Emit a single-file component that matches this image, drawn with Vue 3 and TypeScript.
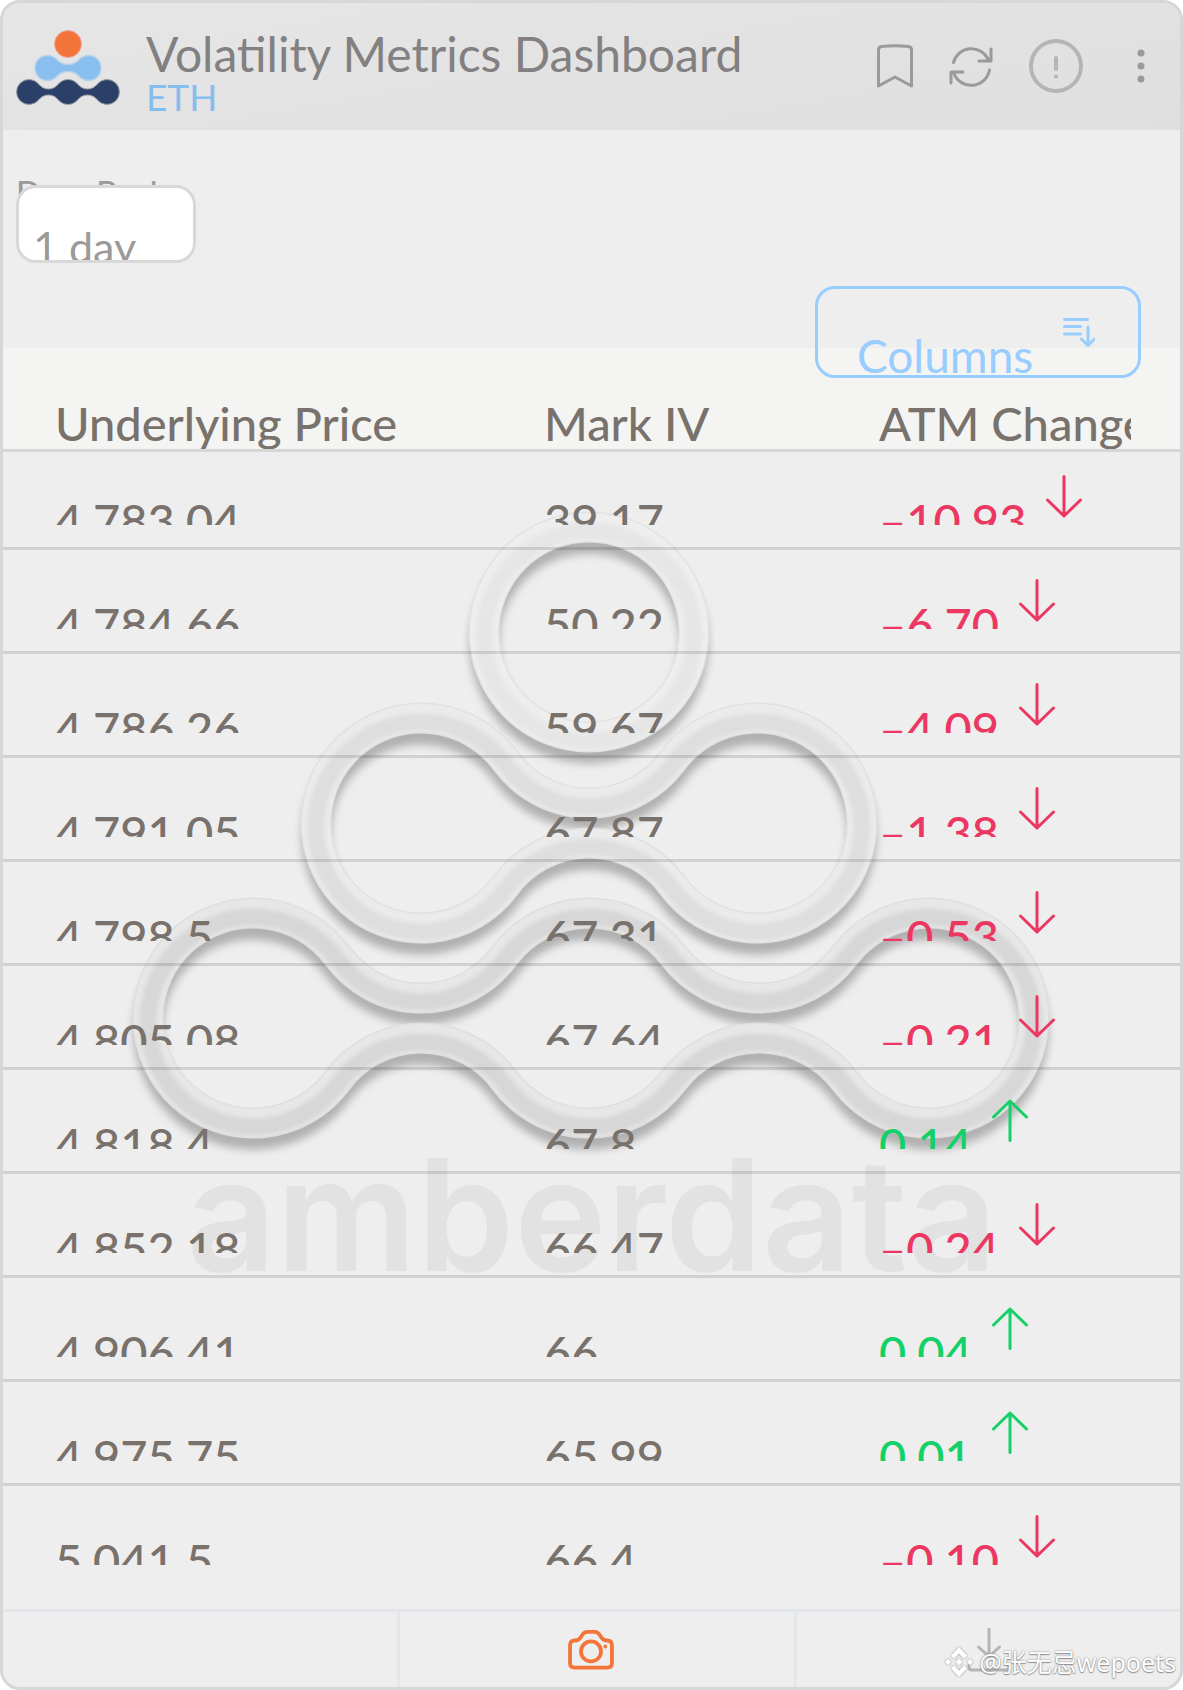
<script setup lang="ts">
interface Row {
  price: string
  markIv: string
  change: string
}

const rows: Row[] = [
  { price: '4,783.04', markIv: '39.17', change: '–10.93' },
  { price: '4,784.66', markIv: '50.22', change: '–6.70' },
  { price: '4,786.26', markIv: '59.67', change: '–4.09' },
  { price: '4,791.05', markIv: '67.87', change: '–1.38' },
  { price: '4,798.5', markIv: '67.31', change: '–0.53' },
  { price: '4,805.08', markIv: '67.64', change: '–0.21' },
  { price: '4,818.4', markIv: '67.8', change: '0.14' },
  { price: '4,852.18', markIv: '66.47', change: '–0.24' },
  { price: '4,906.41', markIv: '66', change: '0.04' },
  { price: '4,975.75', markIv: '65.99', change: '0.01' },
  { price: '5,041.5', markIv: '66.4', change: '–0.10' },
]

const isDown = (row: Row): boolean => row.change.startsWith('–')

// Outline of a row of circles of radius r joined by smooth waists.
function chain(xs: number[], cy: number, r: number, waist: number): string {
  const last = xs.length - 1
  const joints = xs.slice(0, last).map((x, i) => {
    const half = (xs[i + 1] - x) / 2
    const fillet = (half * half + waist * waist - r * r) / (2 * (r - waist))
    const h = fillet + waist
    const k = r / (r + fillet)
    return { fillet, x1: x + half * k, x2: xs[i + 1] - half * k, dy: h * k }
  })
  const first = joints[0]
  let d = `M${first.x1} ${cy - first.dy}`
  joints.forEach((j, i) => {
    d += `A${j.fillet} ${j.fillet} 0 0 0 ${j.x2} ${cy - j.dy}`
    if (i < last - 1) d += `A${r} ${r} 0 0 1 ${joints[i + 1].x1} ${cy - joints[i + 1].dy}`
  })
  const end = joints[last - 1]
  d += `A${r} ${r} 0 1 1 ${end.x2} ${cy + end.dy}`
  for (let i = last - 1; i >= 0; i--) {
    const j = joints[i]
    d += `A${j.fillet} ${j.fillet} 0 0 0 ${j.x1} ${cy + j.dy}`
    if (i > 0) d += `A${r} ${r} 0 0 1 ${joints[i - 1].x2} ${cy + joints[i - 1].dy}`
  }
  return d + `A${r} ${r} 0 1 1 ${first.x1} ${cy - first.dy}Z`
}

const logoMiddle = chain([31.5, 72.5], 39, 12.5, 3.5)
const logoBottom = chain([13, 52, 91], 63, 12.5, 3)

const shapes = [
  { d: 'M586 75a105 105 0 1 1 0 210a105 105 0 1 1 0 -210Z', rim: '#e2e2e2', top: '#eeeeee', core: '#e6e6e6' },
  { d: chain([418, 754], 371, 105, 20), rim: '#e1e1e1', top: '#ebebeb', core: '#dedede' },
  { d: chain([250, 586, 926], 566, 105, 20), rim: '#dfdfdf', top: '#e7e7e7', core: '#d7d7d7' },
]
</script>

<template>
  <main class="card">
    <header class="head">
      <svg class="logo" viewBox="0 0 104 76" aria-hidden="true">
        <circle cx="52" cy="15" r="13.5" fill="#f27438" stroke="#eca8a0" stroke-width="1" />
        <path :d="logoMiddle" fill="#88bfee" stroke="#b4d2ec" stroke-width="1.5" />
        <path :d="logoBottom" fill="#2b4068" stroke="#a2a2a6" stroke-width="1" />
      </svg>
      <div class="titles">
        <h1>Volatility Metrics Dashboard</h1>
        <p>ETH</p>
      </div>
      <nav class="actions" aria-label="Widget actions">
        <button type="button" aria-label="Bookmark">
          <svg width="36" height="44" viewBox="0 0 36 44">
            <path d="M1.500 42V6q0-3 3-3.500q13.500-1.500 27 0q3 .5 3 3.500v36L18 33Z" />
          </svg>
        </button>
        <button type="button" aria-label="Refresh">
          <svg width="44" height="42" viewBox="0 0 44 42">
            <path d="M4.500 17.500A18.500 18.500 0 0 1 39 14M42 4v12H30M40.500 25A18.500 18.500 0 0 1 5 28.500M2 38V27h12" />
          </svg>
        </button>
        <button type="button" class="info" aria-label="Information">
          <svg width="54" height="54" viewBox="0 0 54 54">
            <circle cx="27" cy="27" r="25" />
            <path class="thick" d="M27 19v11M27 37.500v.1" />
          </svg>
        </button>
        <button type="button" aria-label="More">
          <svg width="8" height="34" viewBox="0 0 8 34">
            <g class="dots"><circle cx="4" cy="4" r="3.500" /><circle cx="4" cy="17" r="3.500" /><circle cx="4" cy="30" r="3.500" /></g>
          </svg>
        </button>
      </nav>
    </header>

    <section class="controls">
      <label for="days">Days Back</label>
      <select id="days">
        <option>1 day</option>
      </select>
      <button type="button" class="columns">
        <span>Columns</span>
        <svg width="32" height="32" viewBox="0 0 32 32" aria-hidden="true">
          <path d="M1.500 3.500h23M1.500 10.500h16M1.500 18h16M25 11v18M18.500 23l6.500 6.500l6.500-6.500" />
        </svg>
      </button>
    </section>

    <section class="data">
      <svg class="mark" viewBox="0 0 1177 830" aria-hidden="true">
        <defs>
          <filter id="soft" x="-10%" y="-10%" width="120%" height="130%"><feGaussianBlur stdDeviation="4" /></filter>
          <filter id="core" x="-10%" y="-10%" width="120%" height="120%"><feGaussianBlur stdDeviation="2" /></filter>
        </defs>
        <g v-for="s in shapes" :key="s.d" fill="none">
          <path :d="s.d" stroke="#b0b0b0" stroke-width="29" transform="translate(0 12)" filter="url(#soft)" />
          <path :d="s.d" :stroke="s.rim" stroke-width="31" />
          <path :d="s.d" :stroke="s.top" stroke-width="28" />
          <path :d="s.d" :stroke="s.core" stroke-width="17" transform="translate(0 4)" filter="url(#core)" />
        </g>
        <text x="589" y="819" text-anchor="middle">amberdata</text>
      </svg>
      <table>
        <thead>
          <tr>
            <th scope="col"><span>Underlying Price</span></th>
            <th scope="col"><span>Mark IV</span></th>
            <th scope="col"><span>ATM Change</span></th>
          </tr>
        </thead>
        <tbody>
          <tr v-for="row in rows" :key="row.price">
            <td><span class="num">{{ row.price }}</span></td>
            <td><span class="num">{{ row.markIv }}</span></td>
            <td>
              <div class="change" :class="isDown(row) ? 'down' : 'up'">
                <span class="num">{{ row.change }}</span>
                <svg width="36" height="43" viewBox="0 0 36 43" aria-hidden="true">
                  <path v-if="isDown(row)" d="M18 1.500v39.500M1.500 25L18 41l16.500-16" />
                  <path v-else d="M18 41.500V2M1.500 18L18 2l16.500 16" />
                </svg>
              </div>
            </td>
          </tr>
        </tbody>
      </table>
    </section>

    <footer class="foot">
      <div class="slot"></div>
      <div class="slot middle">
        <button type="button" aria-label="Take snapshot">
          <svg class="camera" width="46" height="40" viewBox="0 0 48 42">
            <path d="M2 35V16q0-5 5-5q4 0 6-3l2-3q2-3 5-3h8q3 0 5 3l2 3q2 3 6 3q5 0 5 5v19q0 4.500-5 4.500H7q-5 0-5-4.500Z" />
            <ellipse cx="24" cy="22.500" rx="10.500" ry="10.500" />
            <path d="M39 17.200v.1" />
          </svg>
        </button>
      </div>
      <div class="slot">
        <button type="button" aria-label="Download">
          <svg class="download" width="44" height="46" viewBox="0 0 44 46">
            <path d="M22 2v27M11.500 20L22 29.500L32.500 20M2 38v2q0 3 3 3h34q3 0 3-3v-2" />
          </svg>
        </button>
      </div>
    </footer>

    <div class="credit">
      <svg width="28" height="30" viewBox="0 0 28 30" aria-hidden="true">
        <path d="M14 0l8 8.500l-3 3.300L14 6.500l-5 5.300l-3-3.300ZM14 30l8-8.500l-3-3.300l-5 5.300l-5-5.300l-3 3.300ZM14 11.500l3.300 3.500L14 18.500L10.700 15ZM3 11.800L6 15l-3 3.200L0 15ZM25 11.800l3 3.200l-3 3.200l-3-3.200Z" />
      </svg>
      <span>@张无忌wepoets</span>
    </div>
  </main>
</template>

<style>
body {
  margin: 0;
  background: #fff;
}
</style>

<style scoped>
* {
  box-sizing: border-box;
}
.card {
  position: relative;
  overflow: hidden;
  border: 3px solid #d7d7d7;
  border-radius: 20px;
  background: #eee;
  font-family: Lato, "Noto Sans CJK SC", sans-serif;
  color: #78716c;
}
button {
  padding: 0;
  border: 0;
  background: none;
  font: inherit;
  color: inherit;
}
svg {
  display: block;
}
.head {
  display: flex;
  align-items: flex-start;
  height: 127px;
  padding: 0 35px 0 13px;
  background: linear-gradient(170deg, #e6e6e6, #dfdfdf);
}
.logo {
  width: 104px;
  height: 76px;
  margin-top: 26px;
}
.titles {
  flex: 1;
  padding: 22px 0 0 26px;
}
h1,
p {
  margin: 0;
  font-weight: 400;
  white-space: nowrap;
}
h1 {
  font-size: 48px;
  line-height: 58px;
  color: #828080;
}
p {
  font-size: 37px;
  line-height: 28px;
  color: #86bdef;
}
.actions {
  display: flex;
  align-items: center;
  gap: 36px;
  height: 126px;
}
.actions svg {
  fill: none;
  stroke: #9b9a98;
  stroke-width: 3;
  stroke-linecap: round;
  stroke-linejoin: round;
}
.actions .info svg {
  stroke: #b5b5b4;
}
.actions .info circle,
.actions .info .thick {
  stroke-width: 4;
}
.actions .dots {
  fill: #9b9a98;
  stroke: none;
}
.actions button:last-child {
  margin-left: 18px;
}
.controls {
  position: relative;
  z-index: 1;
  display: flex;
  flex-direction: column;
  align-items: flex-start;
  height: 218px;
  padding: 42px 39px 0 13px;
}
label {
  height: 13px;
  font-size: 33px;
  font-weight: 500;
  line-height: 40px;
  color: #9c9a98;
}
select {
  flex: none;
  position: relative;
  width: 180px;
  height: 78px;
  padding: 33px 0 0 14px;
  border: 3px solid #d8d8d8;
  border-radius: 20px;
  appearance: none;
  background: #fff;
  font-family: inherit;
  font-size: 43px;
  line-height: 52px;
  color: #9c9a98;
}
.columns {
  flex: none;
  display: flex;
  justify-content: space-between;
  align-self: flex-end;
  align-items: flex-start;
  width: 326px;
  height: 92px;
  margin-top: 23px;
  padding: 27px 43px 0 39px;
  border: 3px solid #99ccff;
  border-radius: 20px;
  color: #99ccff;
  font-size: 46px;
  line-height: 56px;
}
.columns span {
  height: 48px;
  margin-top: 12px;
}
.columns svg {
  fill: none;
  stroke: #99ccff;
  stroke-width: 3;
  stroke-linecap: round;
  stroke-linejoin: round;
}
.data {
  position: relative;
  padding-bottom: 22px;
}
.mark {
  position: absolute;
  top: 104px;
  left: 0;
  width: 100%;
}
.mark text {
  font-family: Inter, sans-serif;
  font-size: 156px;
  font-weight: 600;
  fill: #e2e2e2;
}
table {
  position: relative;
  width: 100%;
  table-layout: fixed;
  border-spacing: 0;
  font-size: 47px;
  line-height: 58px;
}
th,
td {
  padding: 0 0 0 52px;
  border-bottom: 3px solid rgba(0, 0, 0, 0.12);
  text-align: left;
  vertical-align: bottom;
  white-space: nowrap;
}
th {
  padding-top: 46px;
  background: #f4f4f2;
  font-weight: 500;
}
th:nth-child(1) {
  width: 489px;
}
th:nth-child(2) {
  width: 335px;
}
th:nth-child(3) {
  padding-right: 49px;
}
th span {
  display: block;
  height: 55px;
  overflow: hidden;
}
td {
  height: 104px;
  padding-bottom: 22px;
  font-weight: 500;
}
tbody tr:first-child td {
  height: 98px;
}
tbody tr:last-child td {
  height: 101px;
  border-bottom: 0;
}
.num {
  display: block;
  height: 34px;
  overflow: hidden;
}
.change {
  display: flex;
  align-items: flex-end;
  gap: 20px;
}
.change svg {
  margin-bottom: 7px;
  fill: none;
  stroke: currentColor;
  stroke-width: 3;
  stroke-linecap: round;
  stroke-linejoin: round;
}
.down {
  color: #ec3763;
}
.up {
  color: #15d069;
}
.foot {
  display: flex;
  height: 78px;
  border-top: 3px solid #e3e6ea;
}
.slot {
  display: flex;
  flex: 0 0 397px;
  align-items: center;
  justify-content: center;
  border-right: 3px solid #e3e6ea;
}
.slot:last-child {
  flex: 1;
  border-right: 0;
}
.middle {
  padding-right: 12px;
}
.slot svg {
  fill: none;
  stroke-width: 3;
  stroke-linecap: round;
  stroke-linejoin: round;
}
.slot .camera {
  stroke: #f4753a;
  stroke-width: 4;
}
.download {
  stroke: #b4b4b4;
}
.credit {
  position: absolute;
  right: 4px;
  bottom: 8px;
  display: flex;
  align-items: center;
  gap: 6px;
  color: #fff;
  font-family: "Noto Sans", "Noto Sans CJK SC", sans-serif;
  font-size: 25px;
  line-height: 34px;
  text-shadow: 0 0 2px #777, 0 1px 1px #999;
}
.credit svg {
  fill: #fff;
  filter: drop-shadow(0 0 1px #888);
}
</style>
